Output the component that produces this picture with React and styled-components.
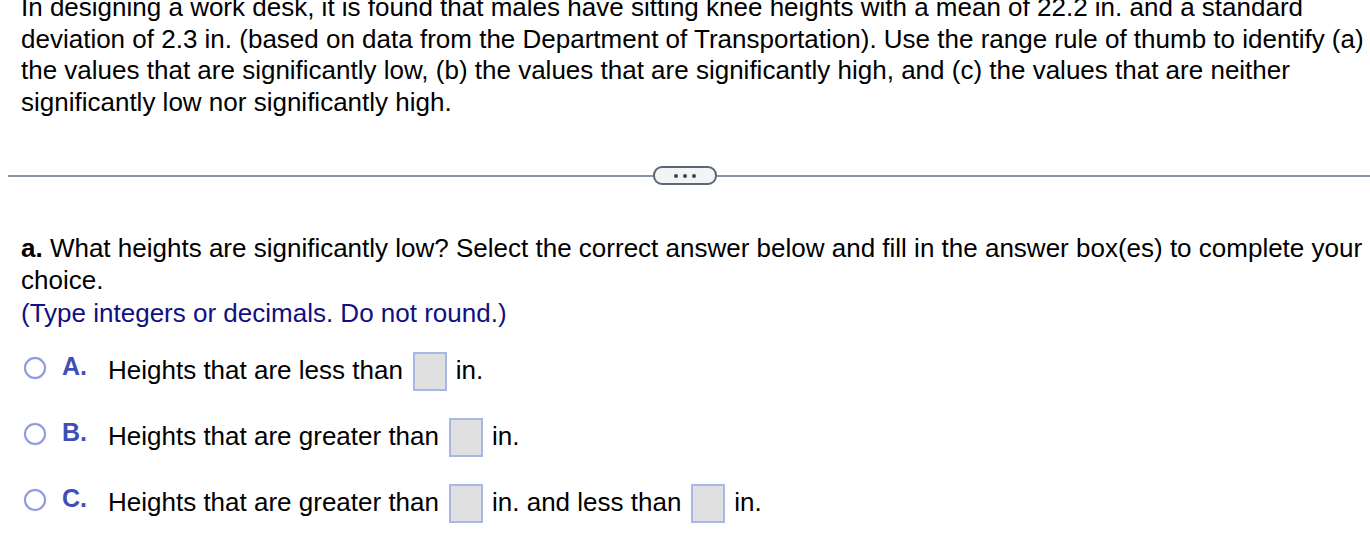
import React from 'react';
import styled, { createGlobalStyle } from 'styled-components';

const GlobalStyle = createGlobalStyle`
  html, body {
    margin: 0;
    padding: 0;
    background: #ffffff;
    overflow: hidden;
  }
  body {
    font-family: "Liberation Sans", Arial, sans-serif;
    color: #000000;
  }
`;

const Page = styled.div`
  width: 1370px;
  height: 556px;
  overflow: hidden;
`;

const Question = styled.p`
  margin: -8px 0 0 0;
  padding: 0 2px 0 21px;
  font-size: 26px;
  line-height: 31.6px;
`;

const Divider = styled.div`
  display: flex;
  align-items: center;
  margin: 48px 0 0 8px;
`;

const Rule = styled.div`
  flex: 1 0 ${props => props.$basis || 0}px;
  height: 2px;
  background: #8a93a3;
`;

const MoreButton = styled.div`
  width: 60px;
  height: 15px;
  border: 2px solid #5c6675;
  border-radius: 9px;
  background: #f3f4f6;
  display: flex;
  align-items: center;
  justify-content: center;
  gap: 5px;
`;

const Dot = styled.span`
  width: 4px;
  height: 4px;
  border-radius: 50%;
  background: #3c4350;
`;

const Part = styled.div`
  padding: 0 2px 0 21px;
  margin-top: 48px;
  font-size: 26px;
  line-height: 31.6px;
`;

const Prompt = styled.p`
  margin: 0;
`;

const Note = styled.p`
  margin: 1px 0 0 0;
  color: #101080;
`;

const Options = styled.div`
  display: flex;
  flex-direction: column;
  gap: 26px;
  margin-top: 22px;
  margin-left: 3px;
`;

const Option = styled.div`
  display: flex;
  align-items: center;
  height: 40px;
`;

const Radio = styled.span`
  width: 18px;
  height: 18px;
  border: 2px solid #8d98e0;
  border-radius: 50%;
  box-sizing: content-box;
  flex: none;
  margin-top: -6px;
  box-shadow: 0 0 1px rgba(80, 90, 200, 0.4);
`;

const Letter = styled.span`
  font-weight: bold;
  color: #3f4fb8;
  font-size: 25px;
  width: 46px;
  margin-left: 16px;
  margin-top: -8px;
`;

const Text = styled.span`
  white-space: pre;
`;

const AnswerBox = styled.span`
  display: inline-block;
  width: 30px;
  height: 35px;
  background: #e0e0e0;
  border: 2px solid #a7b7e6;
  margin: 0 9px 0 10px;
`;

const choices = [
  { letter: 'A.', parts: ['Heights that are less than', 'in.'] },
  { letter: 'B.', parts: ['Heights that are greater than', 'in.'] },
  { letter: 'C.', parts: ['Heights that are greater than', 'in. and less than', 'in.'] },
];

export default function App() {
  return (
    <Page>
      <GlobalStyle />
      <Question>
        In designing a work desk, it is found that males have sitting knee heights with a mean of 22.2 in. and a standard
        deviation of 2.3 in. (based on data from the Department of Transportation). Use the range rule of thumb to identify (a)
        the values that are significantly low, (b) the values that are significantly high, and (c) the values that are neither
        significantly low nor significantly high.
      </Question>
      <Divider>
        <Rule />
        <MoreButton>
          <Dot />
          <Dot />
          <Dot />
        </MoreButton>
        <Rule $basis={8} />
      </Divider>
      <Part>
        <Prompt>
          <b>a.</b> What heights are significantly low? Select the correct answer below and fill in the answer box(es) to complete your
          choice.
        </Prompt>
        <Note>(Type integers or decimals. Do not round.)</Note>
        <Options>
          {choices.map((c) => (
            <Option key={c.letter}>
              <Radio />
              <Letter>{c.letter}</Letter>
              {c.parts.map((p, i) => (
                <React.Fragment key={i}>
                  <Text>{p}</Text>
                  {i < c.parts.length - 1 && <AnswerBox />}
                </React.Fragment>
              ))}
            </Option>
          ))}
        </Options>
      </Part>
    </Page>
  );
}
